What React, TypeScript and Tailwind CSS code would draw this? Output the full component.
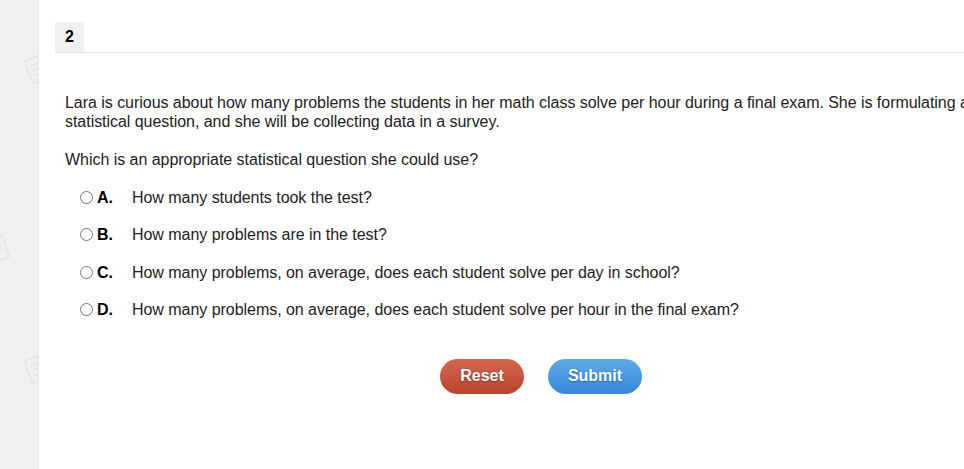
import React from "react";

const options = [
  { key: "A", text: "How many students took the test?" },
  { key: "B", text: "How many problems are in the test?" },
  { key: "C", text: "How many problems, on average, does each student solve per day in school?" },
  { key: "D", text: "How many problems, on average, does each student solve per hour in the final exam?" },
];

function Watermark({ className }: { className: string }) {
  return (
    <svg className={className} width="26" height="30" viewBox="0 0 26 30" fill="none">
      <g transform="rotate(-20 13 15)" stroke="#e7e7e7" strokeWidth="2">
        <rect x="4" y="3" width="18" height="24" rx="2" />
        <path d="M8 10h10M8 15h10M8 20h7" />
      </g>
    </svg>
  );
}

export default function App() {
  return (
    <div
      className="flex h-[469px] w-screen overflow-hidden bg-white text-[#222]"
      style={{ fontFamily: '"Liberation Sans", Arial, sans-serif' }}
    >
      <aside className="relative w-[39px] shrink-0 overflow-hidden bg-[#f1f1f1] border-r border-[#e8e8e8]">
        <Watermark className="absolute left-[24px] top-[54px]" />
        <Watermark className="absolute left-[-16px] top-[234px]" />
        <Watermark className="absolute left-[24px] top-[354px]" />
      </aside>

      <main className="shrink-0 w-[1000px] pl-[16px] pt-[22px]">
        <div className="w-[972px]">
          <div className="flex border-b border-[#e3e3e3]">
            <div className="flex h-[30px] w-[29px] items-center justify-center bg-[#f0f0f0] text-[16px] font-bold text-black">
              2
            </div>
          </div>

          <div className="pl-[10px] pt-[40px] text-[16px] leading-[19px] tracking-[-0.04px] text-[#222]">
            <p className="mb-[19px]">
              Lara is curious about how many problems the students in her math class solve per hour during a final exam. She is formulating a
              <br />
              statistical question, and she will be collecting data in a survey.
            </p>
            <p>Which is an appropriate statistical question she could use?</p>

            <ul className="mt-[19px] flex flex-col gap-[18.3px] pl-[15px]">
              {options.map((o) => (
                <li key={o.key} className="flex items-center h-[19px]">
                  <span className="h-[13px] w-[13px] rounded-full border border-[#767676] bg-white" />
                  <span className="ml-[4px] w-[35px] font-bold text-black">{o.key}.</span>
                  <span>{o.text}</span>
                </li>
              ))}
            </ul>
          </div>

          <div className="mt-[40px] flex justify-center gap-[24px]">
            <button
              type="button"
              className="h-[35px] w-[84px] rounded-full bg-gradient-to-b from-[#d4674f] to-[#b8432e] text-[16px] font-bold text-white [text-shadow:0_1px_2px_rgba(0,0,0,0.35)]"
            >
              Reset
            </button>
            <button
              type="button"
              className="h-[35px] w-[94px] rounded-full bg-gradient-to-b from-[#5eaae8] to-[#3887d8] text-[16px] font-bold text-white [text-shadow:0_1px_2px_rgba(0,0,0,0.35)]"
            >
              Submit
            </button>
          </div>
        </div>
      </main>
    </div>
  );
}
